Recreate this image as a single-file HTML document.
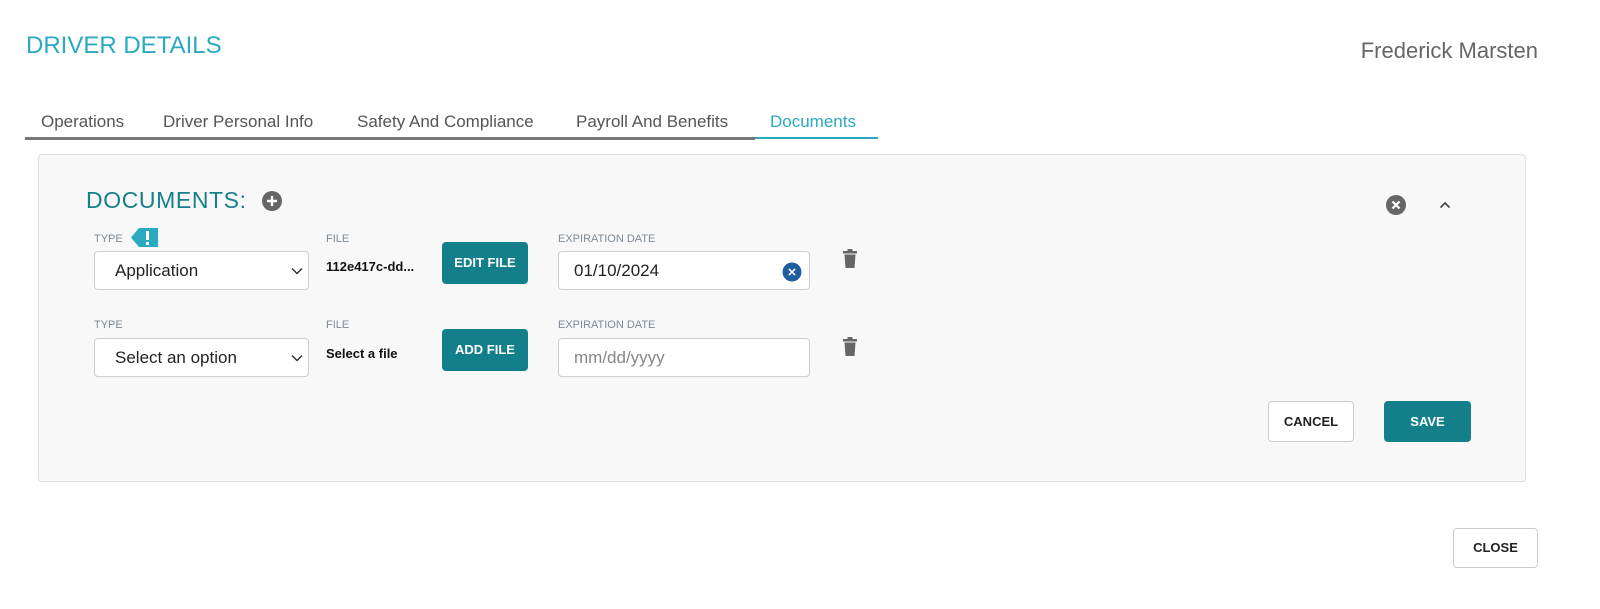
<!DOCTYPE html>
<html><head><style>
*{box-sizing:border-box;margin:0;padding:0}
body{width:1600px;height:609px;background:#fff;font-family:"Liberation Sans",sans-serif;position:relative;overflow:hidden}
.a{position:absolute}
.lbl{position:absolute;font-size:11px;color:#7d8a96}
.sel,.inp{position:absolute;background:#fff;border:1px solid #cfcfcf;border-radius:4px;font-size:17px;color:#222;padding-left:20px;line-height:37px}
.btn{position:absolute;background:#137f8a;color:#fff;font-weight:bold;font-size:13px;border-radius:4px;text-align:center}
.wbtn{position:absolute;background:#fff;border:1px solid #ccc;border-radius:4px;font-size:13px;font-weight:bold;color:#222;text-align:center}
.tab{position:absolute;top:112px;font-size:17px;color:#555}
</style></head><body>
<div class="a" style="left:26px;top:32px;font-size:24px;color:#2aa9c0">DRIVER DETAILS</div>
<div class="a" style="right:62px;top:38px;font-size:22px;color:#666">Frederick Marsten</div>
<div class="tab" style="left:41px">Operations</div>
<div class="tab" style="left:163px">Driver Personal Info</div>
<div class="tab" style="left:357px">Safety And Compliance</div>
<div class="tab" style="left:576px">Payroll And Benefits</div>
<div class="tab" style="left:770px;color:#2aa9c0">Documents</div>
<div class="a" style="left:25px;top:137px;width:730px;height:3px;background:#777"></div>
<div class="a" style="left:755px;top:137px;width:123px;height:2px;background:#2aa9c0"></div>

<div class="a" style="left:38px;top:154px;width:1488px;height:328px;background:#f8f8f8;border:1px solid #ddd;border-radius:4px"></div>
<div class="a" style="left:86px;top:187px;font-size:23px;color:#167f8c;letter-spacing:0.6px">DOCUMENTS:</div>
<svg class="a" style="left:262px;top:191px" width="20" height="20"><circle cx="10" cy="10" r="10" fill="#666"/><path d="M10 5v10M5 10h10" stroke="#fff" stroke-width="2.4"/></svg>
<svg class="a" style="left:1386px;top:195px" width="20" height="20"><circle cx="10" cy="10" r="10" fill="#666"/><path d="M6.5 6.5l7 7M13.5 6.5l-7 7" stroke="#fff" stroke-width="2.2"/></svg>
<svg class="a" style="left:1439px;top:200px" width="12" height="10"><path d="M1.5 7.5L6 3l4.5 4.5" stroke="#444" stroke-width="1.6" fill="none"/></svg>

<div class="lbl" style="left:94px;top:233px">TYPE</div>
<svg class="a" style="left:131px;top:228px" width="27" height="19"><path d="M8 0H27V19H8L0 9.5Z" fill="#2aa9c0"/><rect x="15" y="3" width="3" height="9" fill="#fff"/><rect x="15" y="14" width="3" height="3" fill="#fff"/></svg>
<div class="sel" style="left:94px;top:251px;width:215px;height:39px">Application</div>
<svg class="a" style="left:291px;top:267px" width="12" height="8"><path d="M1 1.5l5 5 5-5" stroke="#333" stroke-width="1.5" fill="none"/></svg>
<div class="lbl" style="left:326px;top:233px">FILE</div>
<div class="a" style="left:326px;top:259px;font-size:13px;font-weight:bold;color:#111">112e417c-dd...</div>
<div class="btn" style="left:442px;top:242px;width:86px;height:42px;line-height:42px">EDIT FILE</div>
<div class="lbl" style="left:558px;top:233px">EXPIRATION DATE</div>
<div class="inp" style="left:558px;top:251px;width:252px;height:39px;padding-left:15px">01/10/2024</div>
<svg class="a" style="left:782px;top:262px" width="20" height="20"><circle cx="10" cy="10" r="9.5" fill="#1d5f9f"/><path d="M7 7l6 6M13 7l-6 6" stroke="#fff" stroke-width="1.6"/></svg>
<svg class="a" style="left:843px;top:249px" width="14" height="20"><rect x="4.5" y="0" width="5" height="2" fill="#666"/><rect x="0" y="2" width="14" height="2.5" fill="#666"/><path d="M1.5 5.5h11l-1 13.5h-9z" fill="#666"/></svg>

<div class="lbl" style="left:94px;top:319px">TYPE</div>
<div class="sel" style="left:94px;top:338px;width:215px;height:39px">Select an option</div>
<svg class="a" style="left:291px;top:354px" width="12" height="8"><path d="M1 1.5l5 5 5-5" stroke="#333" stroke-width="1.5" fill="none"/></svg>
<div class="lbl" style="left:326px;top:319px">FILE</div>
<div class="a" style="left:326px;top:346px;font-size:13px;font-weight:bold;color:#111">Select a file</div>
<div class="btn" style="left:442px;top:329px;width:86px;height:42px;line-height:42px">ADD FILE</div>
<div class="lbl" style="left:558px;top:319px">EXPIRATION DATE</div>
<div class="inp" style="left:558px;top:338px;width:252px;height:39px;padding-left:15px;color:#888">mm/dd/yyyy</div>
<svg class="a" style="left:843px;top:337px" width="14" height="20"><rect x="4.5" y="0" width="5" height="2" fill="#666"/><rect x="0" y="2" width="14" height="2.5" fill="#666"/><path d="M1.5 5.5h11l-1 13.5h-9z" fill="#666"/></svg>

<div class="wbtn" style="left:1268px;top:401px;width:86px;height:41px;line-height:39px">CANCEL</div>
<div class="btn" style="left:1384px;top:401px;width:87px;height:41px;line-height:41px">SAVE</div>
<div class="wbtn" style="left:1453px;top:528px;width:85px;height:40px;line-height:38px">CLOSE</div>
</body></html>
